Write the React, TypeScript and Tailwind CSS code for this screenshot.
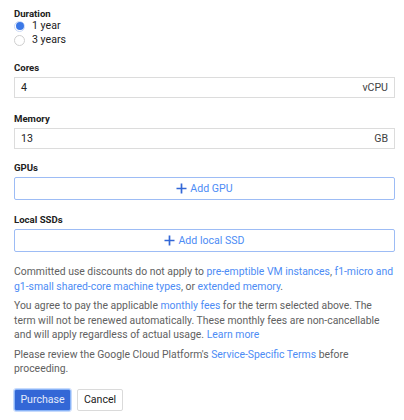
import React from "react";

const Label = ({ children, className = "" }: { children: React.ReactNode; className?: string }) => (
  <div className={`text-[9.6px] leading-[13px] font-bold text-[#212121] ${className}`}>{children}</div>
);

const Radio = ({ checked, label }: { checked?: boolean; label: string }) => (
  <div className="flex items-center h-[14px]">
    <div
      className={`w-[11px] h-[11px] rounded-full border flex items-center justify-center ${
        checked ? "border-[#c9d8f6]" : "border-[#cfcfcf]"
      } bg-white`}
    >
      {checked && <div className="w-[8px] h-[8px] rounded-full bg-[#3b78e7]" />}
    </div>
    <span className="ml-[7px] text-[10.6px] text-[#212121]">{label}</span>
  </div>
);

const Input = ({ value, unit }: { value: string; unit: string }) => (
  <div className="mt-[3px] h-[21px] border border-[#dcdcdc] flex items-center justify-between px-[6px] text-[10.6px] text-[#212121]">
    <span>{value}</span>
    <span className="text-[#424242]">{unit}</span>
  </div>
);

const AddButton = ({ label }: { label: string }) => (
  <div className="mt-[3px] h-[23px] border border-[#9dbcf5] rounded-[2px] flex items-center justify-center text-[10.6px] text-[#4d8cf5]">
    <svg width="11" height="11" viewBox="0 0 11 11" className="mr-[3px]">
      <path d="M5.5 0.5V10.5M0.5 5.5H10.5" stroke="#3367d6" strokeWidth="1.7" />
    </svg>
    <span>{label}</span>
  </div>
);

const A = ({ children }: { children: React.ReactNode }) => <span className="text-[#4d8cf5]">{children}</span>;

const Line = ({ children }: { children: React.ReactNode }) => <div className="whitespace-nowrap">{children}</div>;

export default function App() {
  return (
    <div
      className="w-[404px] h-[420px] bg-white pl-[14px] pr-[9px] pt-[7px] overflow-hidden"
      style={{ fontFamily: "Roboto, 'Liberation Sans', sans-serif" }}
    >
      <Label>Duration</Label>
      <div className="mt-[-1px]">
        <Radio checked label="1 year" />
        <Radio label="3 years" />
      </div>

      <Label className="mt-[14px]">Cores</Label>
      <Input value="4" unit="vCPU" />

      <Label className="mt-[14px]">Memory</Label>
      <Input value="13" unit="GB" />

      <Label className="mt-[12px]">GPUs</Label>
      <AddButton label="Add GPU" />

      <Label className="mt-[13px]">Local SSDs</Label>
      <AddButton label="Add local SSD" />

      <div className="mt-[13px] text-[10.4px] leading-[14.5px] text-[#616161]">
        <div>
          <Line>
            Committed use discounts do not apply to <A>pre-emptible VM instances</A>, <A>f1-micro and</A>
          </Line>
          <Line>
            <A>g1-small shared-core machine types</A>, or <A>extended memory</A>.
          </Line>
        </div>
        <div className="mt-[5px]">
          <Line>
            You agree to pay the applicable <A>monthly fees</A> for the term selected above. The
          </Line>
          <Line>term will not be renewed automatically. These monthly fees are non-cancellable</Line>
          <Line>
            and will apply regardless of actual usage. <A>Learn more</A>
          </Line>
        </div>
        <div className="mt-[5px]">
          <Line>
            Please review the Google Cloud Platform's <A>Service-Specific Terms</A> before
          </Line>
          <Line>proceeding.</Line>
        </div>
      </div>

      <div className="mt-[12px] flex gap-[6px]">
        <button className="h-[22px] w-[57px] bg-[#3367d6] border border-[#8ab4f8] rounded-[2px] text-[10.6px] text-[#e3ebfb] outline outline-1 outline-[#c6dafc]">
          Purchase
        </button>
        <button className="h-[22px] w-[46px] bg-white border border-[#dadada] rounded-[2px] text-[10.6px] text-[#212121]">
          Cancel
        </button>
      </div>
    </div>
  );
}
